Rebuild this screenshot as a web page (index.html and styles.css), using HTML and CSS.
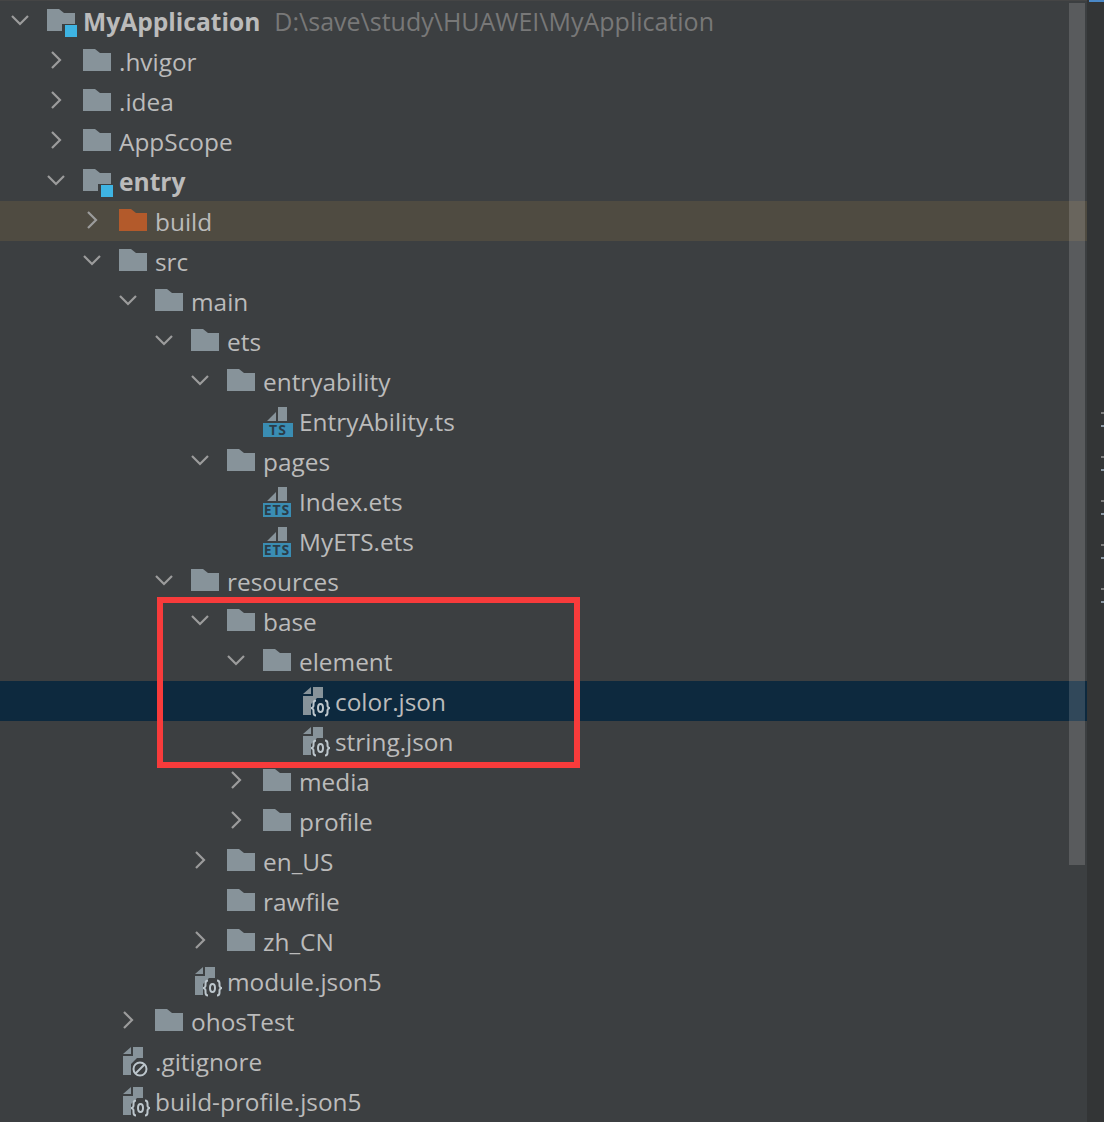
FILE: index.html
```html
<!DOCTYPE html>
<html lang="en">
<head>
  <meta charset="UTF-8" />
  <title>Project</title>
  <link rel="stylesheet" href="styles.css">
</head>
<body>
  <svg class="defs" width="0" height="0">
    <symbol id="open" viewBox="0 0 24 24"><path d="M4 8l8 8 8-8" /></symbol>
    <symbol id="closed" viewBox="0 0 24 24"><path d="M8 4l8 8-8 8" /></symbol>
    <symbol id="folder" viewBox="0 0 28 22"><path d="M0 0H12L17 4H28V22H0Z" /></symbol>
    <symbol id="module" viewBox="0 0 30 28">
      <path class="fold" d="M0 0H12L17 4H28V15H15V22H0Z" />
      <rect class="square" x="18" y="16" width="12" height="12" />
    </symbol>
    <symbol id="doc" viewBox="0 0 20 14">
      <path d="M0 14L9 5V14ZM11 0H20V14H11Z" />
    </symbol>
    <symbol id="json" viewBox="0 0 30 30">
      <path class="page" d="M0 7L8 0V7ZM10 0H20V11H14L8 17V28H0V9H10Z" />
      <g class="braces">
        <path d="M13 13.500c-2 0-2.500 1-2.500 3v2c0 1-1 2.500-2.500 2.500 1.500 0 2.500 1.500 2.500 2.500v2c0 2 .5 3 2.500 3" />
        <path d="M22 13.500c2 0 2.500 1 2.500 3v2c0 1 1 2.500 2.500 2.500-1.500 0-2.500 1.500-2.500 2.500v2c0 2-.5 3-2.500 3" />
        <path d="M17.500 17c1.800 0 2.500 1.500 2.500 4s-.7 4-2.500 4-2.500-1.500-2.500-4 .7-4 2.500-4Z" />
      </g>
    </symbol>
    <symbol id="ignore" viewBox="0 0 30 30">
      <path class="page" d="M0 7L8 0V7ZM10 0H20V11H14L8 17V28H0V9H10Z" />
      <g class="braces">
        <circle cx="17" cy="22" r="6.500" />
        <path d="M12.500 26.500l9-9" />
      </g>
    </symbol>
  </svg>

  <div class="window">
    <div class="tree">
      <div class="row lvl-0 root">
        <svg class="twist"><use href="#open" /></svg>
        <span class="icon"><svg class="mod"><use href="#module" /></svg></span>
        <span class="name">MyApplication</span><span class="path">D:\save\study\HUAWEI\MyApplication</span>
      </div>
      <div class="row lvl-1"><svg class="twist"><use href="#closed" /></svg><span class="icon"><svg class="dir"><use href="#folder" /></svg></span><span class="name">.hvigor</span></div>
      <div class="row lvl-1"><svg class="twist"><use href="#closed" /></svg><span class="icon"><svg class="dir"><use href="#folder" /></svg></span><span class="name">.idea</span></div>
      <div class="row lvl-1"><svg class="twist"><use href="#closed" /></svg><span class="icon"><svg class="dir"><use href="#folder" /></svg></span><span class="name">AppScope</span></div>
      <div class="row lvl-1 root"><svg class="twist"><use href="#open" /></svg><span class="icon"><svg class="mod"><use href="#module" /></svg></span><span class="name">entry</span></div>
      <div class="row lvl-2 excluded"><svg class="twist"><use href="#closed" /></svg><span class="icon"><svg class="dir"><use href="#folder" /></svg></span><span class="name">build</span></div>
      <div class="row lvl-2"><svg class="twist"><use href="#open" /></svg><span class="icon"><svg class="dir"><use href="#folder" /></svg></span><span class="name">src</span></div>
      <div class="row lvl-3"><svg class="twist"><use href="#open" /></svg><span class="icon"><svg class="dir"><use href="#folder" /></svg></span><span class="name">main</span></div>
      <div class="row lvl-4"><svg class="twist"><use href="#open" /></svg><span class="icon"><svg class="dir"><use href="#folder" /></svg></span><span class="name">ets</span></div>
      <div class="row lvl-5"><svg class="twist"><use href="#open" /></svg><span class="icon"><svg class="dir"><use href="#folder" /></svg></span><span class="name">entryability</span></div>
      <div class="row lvl-6 leaf">
        <span class="icon"><span class="script"><svg class="script-doc"><use href="#doc" /></svg><span class="badge wide">TS</span></span></span>
        <span class="name">EntryAbility.ts</span>
      </div>
      <div class="row lvl-5"><svg class="twist"><use href="#open" /></svg><span class="icon"><svg class="dir"><use href="#folder" /></svg></span><span class="name">pages</span></div>
      <div class="row lvl-6 leaf">
        <span class="icon"><span class="script"><svg class="script-doc"><use href="#doc" /></svg><span class="badge">ETS</span></span></span>
        <span class="name">Index.ets</span>
      </div>
      <div class="row lvl-6 leaf">
        <span class="icon"><span class="script"><svg class="script-doc"><use href="#doc" /></svg><span class="badge">ETS</span></span></span>
        <span class="name">MyETS.ets</span>
      </div>
      <div class="row lvl-4"><svg class="twist"><use href="#open" /></svg><span class="icon"><svg class="dir"><use href="#folder" /></svg></span><span class="name">resources</span></div>
      <div class="row lvl-5"><svg class="twist"><use href="#open" /></svg><span class="icon"><svg class="dir"><use href="#folder" /></svg></span><span class="name">base</span></div>
      <div class="row lvl-6"><svg class="twist"><use href="#open" /></svg><span class="icon"><svg class="dir"><use href="#folder" /></svg></span><span class="name">element</span></div>
      <div class="row lvl-7 leaf selected"><span class="icon"><svg class="file"><use href="#json" /></svg></span><span class="name">color.json</span></div>
      <div class="row lvl-7 leaf"><span class="icon"><svg class="file"><use href="#json" /></svg></span><span class="name">string.json</span></div>
      <div class="row lvl-6"><svg class="twist"><use href="#closed" /></svg><span class="icon"><svg class="dir"><use href="#folder" /></svg></span><span class="name">media</span></div>
      <div class="row lvl-6"><svg class="twist"><use href="#closed" /></svg><span class="icon"><svg class="dir"><use href="#folder" /></svg></span><span class="name">profile</span></div>
      <div class="row lvl-5"><svg class="twist"><use href="#closed" /></svg><span class="icon"><svg class="dir"><use href="#folder" /></svg></span><span class="name">en_US</span></div>
      <div class="row lvl-5 leaf"><span class="icon"><svg class="dir"><use href="#folder" /></svg></span><span class="name">rawfile</span></div>
      <div class="row lvl-5"><svg class="twist"><use href="#closed" /></svg><span class="icon"><svg class="dir"><use href="#folder" /></svg></span><span class="name">zh_CN</span></div>
      <div class="row lvl-4 leaf"><span class="icon"><svg class="file"><use href="#json" /></svg></span><span class="name">module.json5</span></div>
      <div class="row lvl-3"><svg class="twist"><use href="#closed" /></svg><span class="icon"><svg class="dir"><use href="#folder" /></svg></span><span class="name">ohosTest</span></div>
      <div class="row lvl-2 leaf"><span class="icon"><svg class="file"><use href="#ignore" /></svg></span><span class="name">.gitignore</span></div>
      <div class="row lvl-2 leaf"><span class="icon"><svg class="file"><use href="#json" /></svg></span><span class="name">build-profile.json5</span></div>

      <div class="scrollbar"></div>
      <div class="highlight"></div>
    </div>

    <div class="gutter">
      <div class="gutter-top"></div>
      <div class="marks">
        <span class="mark"></span><span class="mark"></span><span class="mark"></span><span class="mark"></span><span class="mark"></span>
      </div>
    </div>
  </div>
</body>
</html>
```

FILE: styles.css
```css
/* Page */
body {
  margin: 0;
  height: 1122px;
  overflow: hidden;
  background: #3c3f41;
  font-family: "Open Sans", "Noto Sans", sans-serif;
}

.defs {
  position: absolute;
}

.window {
  display: flex;
  height: 1122px;
}

/* Project tree */
.tree {
  position: relative;
  width: 1087px;
  border-top: 1px solid #454545;
  overflow: hidden;
  background: #3c3f41;
}

.row {
  display: flex;
  align-items: center;
  height: 40px;
  font-size: 24.4px;
  color: #bbbbbb;
  white-space: nowrap;
}

.lvl-0 { padding-left: 2px; }
.lvl-1 { padding-left: 38px; }
.lvl-2 { padding-left: 74px; }
.lvl-3 { padding-left: 110px; }
.lvl-4 { padding-left: 146px; }
.lvl-5 { padding-left: 182px; }
.lvl-6 { padding-left: 218px; }
.lvl-7 { padding-left: 254px; }

/* Rows with no arrow keep the arrow's width */
.leaf::before {
  content: "";
  flex: none;
  width: 45px;
}

.root .name {
  font-size: 24.6px;
  font-weight: 700;
}

.path {
  margin-left: 14px;
  font-size: 25px;
  color: #787878;
}

.excluded {
  background: #4f4b41;
}

.excluded .dir {
  fill: #b35a2b;
}

.selected {
  background: #0d293e;
}

.selected .braces {
  stroke: #d4dde2;
}

/* Icons */
.twist {
  flex: none;
  width: 24px;
  height: 24px;
  margin: -2px 15px 0 6px;
  fill: none;
  stroke: #9c9c9c;
  stroke-width: 2.2;
}

.icon {
  flex: none;
  display: flex;
  align-items: center;
  width: 36px;
  height: 40px;
}

.dir {
  width: 28px;
  height: 22px;
  margin-top: -2px;
  fill: #87939a;
}

.mod {
  width: 30px;
  height: 28px;
  margin-top: 4px;
}

.fold {
  fill: #87939a;
}

.square {
  fill: #3eb4e3;
}

.script {
  display: flex;
  flex-direction: column;
  gap: 2px;
  margin-top: 2px;
}

.script-doc {
  width: 20px;
  height: 14px;
  margin-left: 4px;
  fill: #87939a;
}

.badge {
  width: 28px;
  height: 14px;
  background: #3a8db3;
  color: #2b3d49;
  font-size: 14px;
  font-weight: 700;
  line-height: 14px;
  text-align: center;
  letter-spacing: 1px;
}

.badge.wide {
  width: 30px;
}

.file {
  width: 30px;
  height: 30px;
  margin: 2px 0 0 4px;
  fill: none;
}

.page {
  fill: #87939a;
}

.braces {
  fill: none;
  stroke: #bcc6cc;
  stroke-width: 2;
}

/* Overlays */
.scrollbar {
  position: absolute;
  top: 2px;
  left: 1069px;
  width: 16px;
  height: 862px;
  background: rgba(255, 255, 255, 0.15);
}

.highlight {
  position: absolute;
  top: 596px;
  left: 157px;
  box-sizing: border-box;
  width: 423px;
  height: 171px;
  border: 6px solid #f73b3b;
}

/* Right hand strip */
.gutter {
  flex: 1;
  background: #333536;
}

.gutter-top {
  height: 2px;
  margin-left: 2px;
  background: #4a88c7;
}

.marks {
  display: flex;
  flex-direction: column;
  gap: 29px;
  margin: 410px 0 0 14px;
}

.mark {
  width: 3px;
  height: 15px;
  border-top: 2px solid #7d7d7d;
  border-bottom: 2px solid #8a97a3;
  box-sizing: border-box;
}
```
